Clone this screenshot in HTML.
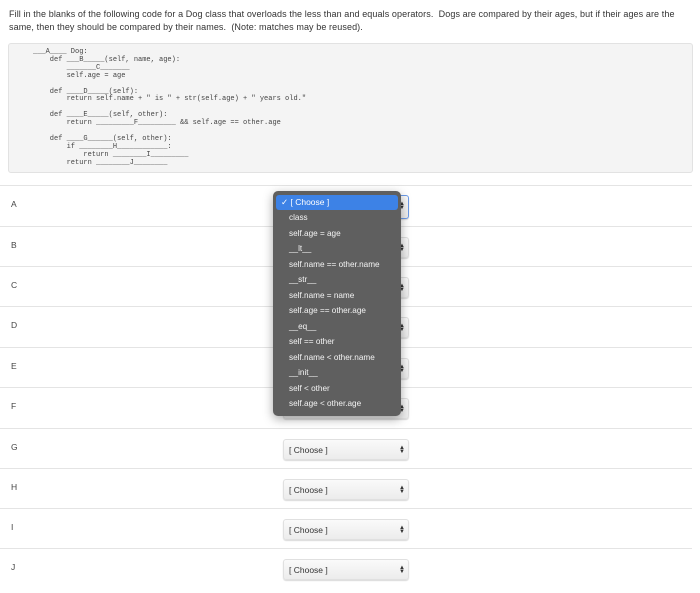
<!DOCTYPE html>
<html><head><style>
body{margin:0;width:700px;height:593px;background:#fff;font-family:"Liberation Sans",sans-serif;color:#2d3b45;position:relative;overflow:hidden}
.q{position:absolute;left:9px;top:8px;width:690px;font-size:9px;line-height:13px;letter-spacing:0.1px;color:#333;white-space:nowrap}
.code{position:absolute;left:8px;top:43px;width:683px;height:128px;background:#f4f4f4;border:1px solid #e2e2e2;border-radius:3px}
pre{margin:0;position:absolute;left:24px;top:5px;font-family:"Liberation Mono",monospace;font-size:7px;line-height:7.9px;color:#444}
.row{position:absolute;left:0;width:692px;border-top:1px solid #e4e4e4;height:40px}
.lab{position:absolute;left:11px;top:13px;font-size:8.5px;color:#444}
.sel{position:absolute;left:283px;top:10px;width:126px;height:21px;border:1px solid #e0e0e0;border-radius:3px;background:linear-gradient(#fafafa,#ececec);box-shadow:0 1px 1px rgba(0,0,0,.15);font-size:8.5px;color:#333;line-height:21px;box-sizing:border-box;padding-left:5px}
.arr{position:absolute;right:3px;top:0;font-size:6px;line-height:4px;padding-top:6px;color:#333}
.menu{position:absolute;left:273px;top:191px;width:128px;height:225px;background:#5f5f5f;border-radius:5px;box-shadow:0 3px 10px rgba(0,0,0,.35)}
.menu div{height:15.5px;line-height:15.5px;padding-left:16px;font-size:8.2px;color:#f4f4f4}
.menu .hl{background:#3d82e6;margin:4px 3px 0 3px;padding-left:5px;border-radius:3px;height:15px;color:#fff;font-size:8.5px}
</style></head><body>
<div class="q">Fill in the blanks of the following code for a Dog class that overloads the less than and equals operators.&nbsp; Dogs are compared by their ages, but if their ages are the<br>same, then they should be compared by their names.&nbsp; (Note: matches may be reused).</div>
<div class="code"><pre>___A____ Dog:
    def ___B_____(self, name, age):
        _______C_______
        self.age = age

    def ____D_____(self):
        return self.name + " is " + str(self.age) + " years old."

    def ____E_____(self, other):
        return _________F_________ &amp;&amp; self.age == other.age

    def ____G______(self, other):
        if ________H____________:
            return ________I_________
        return ________J________</pre></div>

<div class="row" style="top:185px"><span class="lab">A</span><div class="sel" style="border:1.5px solid #6a9ae8;top:9px;height:24px"><span class="arr">▲<br>▼</span></div></div>
<div class="row" style="top:226px"><span class="lab">B</span><div class="sel"><span class="arr">▲<br>▼</span></div></div>
<div class="row" style="top:266px"><span class="lab">C</span><div class="sel"><span class="arr">▲<br>▼</span></div></div>
<div class="row" style="top:306px"><span class="lab">D</span><div class="sel"><span class="arr">▲<br>▼</span></div></div>
<div class="row" style="top:347px"><span class="lab">E</span><div class="sel"><span class="arr">▲<br>▼</span></div></div>
<div class="row" style="top:387px"><span class="lab">F</span><div class="sel"><span class="arr">▲<br>▼</span></div></div>
<div class="row" style="top:428px"><span class="lab">G</span><div class="sel">[ Choose ]<span class="arr">▲<br>▼</span></div></div>
<div class="row" style="top:468px"><span class="lab">H</span><div class="sel">[ Choose ]<span class="arr">▲<br>▼</span></div></div>
<div class="row" style="top:508px"><span class="lab">I</span><div class="sel">[ Choose ]<span class="arr">▲<br>▼</span></div></div>
<div class="row" style="top:548px"><span class="lab">J</span><div class="sel">[ Choose ]<span class="arr">▲<br>▼</span></div></div>

<div class="menu">
<div class="hl">✓ [ Choose ]</div>
<div>class</div>
<div>self.age = age</div>
<div>__lt__</div>
<div>self.name == other.name</div>
<div>__str__</div>
<div>self.name = name</div>
<div>self.age == other.age</div>
<div>__eq__</div>
<div>self == other</div>
<div>self.name &lt; other.name</div>
<div>__init__</div>
<div>self &lt; other</div>
<div>self.age &lt; other.age</div>
</div>
</body></html>
